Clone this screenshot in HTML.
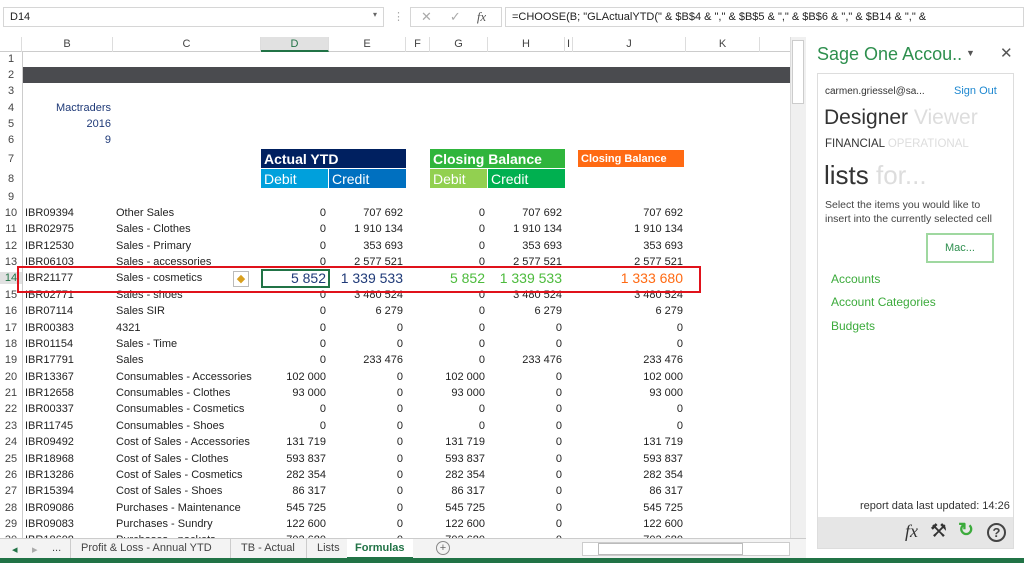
<!DOCTYPE html>
<html><head><meta charset="utf-8"><style>
*{margin:0;padding:0;box-sizing:border-box}
body{width:1024px;height:563px;overflow:hidden;background:#fff;font-family:"Liberation Sans",sans-serif;font-size:11px;color:#222;position:relative}
.a{position:absolute}
.rh{position:absolute;left:0;width:22px;text-align:center;color:#444;font-size:11px}
.c{position:absolute;white-space:nowrap;font-size:11px}
.r{text-align:right}
.ch{position:absolute;top:37px;height:15px;text-align:center;color:#444;font-size:11px;border-right:1px solid #ddd;line-height:15px}
</style></head><body>
<div class="a" style="left:3px;top:7px;width:381px;height:20px;border:1px solid #d6d6d6;padding:3px 6px;font-size:11px">D14<span style="position:absolute;right:6px;top:2px;font-size:8px;color:#666">▾</span></div>
<div class="a" style="left:393px;top:10px;color:#aaa">⋮</div>
<div class="a" style="left:410px;top:7px;width:92px;height:20px;border:1px solid #d6d6d6;color:#aaa;font-size:13px;padding-top:1px"><span style="margin-left:10px">✕</span><span style="margin-left:18px">✓</span><span style="margin-left:16px;font-family:'Liberation Serif';font-style:italic;color:#555">fx</span></div>
<div class="a" style="left:505px;top:7px;width:519px;height:20px;border:1px solid #d6d6d6;padding:3px 6px;font-size:11px">=CHOOSE(B; "GLActualYTD(" &amp; $B$4 &amp; "," &amp; $B$5 &amp; "," &amp; $B$6 &amp; "," &amp; $B14 &amp; "," &amp;</div>
<div class="a" style="left:0;top:37px;width:790px;height:15px;border-bottom:1px solid #ccc"></div>
<div class="ch" style="left:0;width:22px"></div>
<div class="ch" style="left:22px;width:91px">B</div>
<div class="ch" style="left:113px;width:148px">C</div>
<div class="ch" style="left:261px;width:68px;background:#e1e1e1;border-bottom:2px solid #217346;color:#217346">D</div>
<div class="ch" style="left:329px;width:77px">E</div>
<div class="ch" style="left:406px;width:24px">F</div>
<div class="ch" style="left:430px;width:58px">G</div>
<div class="ch" style="left:488px;width:77px">H</div>
<div class="ch" style="left:565px;width:8px">I</div>
<div class="ch" style="left:573px;width:113px">J</div>
<div class="ch" style="left:686px;width:74px">K</div>
<div class="a" style="left:22px;top:52px;width:1px;height:486px;background:#ccc"></div>
<div class="rh" style="top:53px">1</div>
<div class="rh" style="top:69px">2</div>
<div class="a" style="left:23px;top:67px;width:767px;height:16px;background:#4a4b4f"></div>
<div class="rh" style="top:85px">3</div>
<div class="rh" style="top:102px">4</div>
<div class="rh" style="top:118px">5</div>
<div class="rh" style="top:134px">6</div>
<div class="rh" style="top:153px">7</div>
<div class="rh" style="top:173px">8</div>
<div class="rh" style="top:191px">9</div>
<div class="c r" style="left:22px;width:89px;top:102px;color:#1f3a78">Mactraders</div>
<div class="c r" style="left:22px;width:89px;top:118px;color:#1f3a78">2016</div>
<div class="c r" style="left:22px;width:89px;top:134px;color:#1f3a78">9</div>
<div class="a" style="left:261px;top:149px;width:145px;height:19px;background:#002060;color:#fff;font-weight:bold;font-size:14px;padding:2px 3px">Actual YTD</div>
<div class="a" style="left:261px;top:169px;width:67px;height:19px;background:#00a0dc;color:#fff;font-size:14px;padding:2px 3px">Debit</div>
<div class="a" style="left:329px;top:169px;width:77px;height:19px;background:#0070c0;color:#fff;font-size:14px;padding:2px 3px">Credit</div>
<div class="a" style="left:430px;top:149px;width:135px;height:19px;background:#2fb53c;color:#fff;font-weight:bold;font-size:14px;padding:2px 3px">Closing Balance</div>
<div class="a" style="left:430px;top:169px;width:57px;height:19px;background:#92d050;color:#fff;font-size:14px;padding:2px 3px">Debit</div>
<div class="a" style="left:488px;top:169px;width:77px;height:19px;background:#00b050;color:#fff;font-size:14px;padding:2px 3px">Credit</div>
<div class="a" style="left:578px;top:150px;width:106px;height:17px;background:#ff6a13;color:#fff;font-weight:bold;font-size:11px;padding:3px 3px">Closing Balance</div>
<div id="rows"></div>
<div class="a" style="left:17px;top:266px;width:684px;height:27px;border:2px solid #e0121b"></div>
<div class="a" style="left:261px;top:269px;width:69px;height:19px;border:2px solid #217346"></div>
<div class="a" style="left:233px;top:271px;width:16px;height:16px;border:1px solid #bbb;background:#fff;text-align:center;color:#d9a020;font-size:11px">◆</div>
<div class="a" style="left:790px;top:37px;width:16px;height:501px;background:#f0f0f0;border-left:1px solid #ddd"></div>
<div class="a" style="left:792px;top:40px;width:12px;height:64px;background:#fff;border:1px solid #ccc"></div>
<div class="a" style="left:0;top:538px;width:806px;height:20px;background:#f3f3f3;border-top:1px solid #ccc;color:#444;font-size:11px">
<span class="a" style="left:12px;top:4px;color:#217346">◂</span><span class="a" style="left:32px;top:4px;color:#aaa">▸</span><span class="a" style="left:52px;top:3px">...</span>
<span class="a" style="left:70px;top:0;height:19px;border-left:1px solid #ccc;padding:3px 10px">Profit &amp; Loss - Annual YTD</span>
<span class="a" style="left:230px;top:0;height:19px;border-left:1px solid #ccc;padding:3px 10px">TB - Actual</span>
<span class="a" style="left:306px;top:0;height:19px;border-left:1px solid #ccc;padding:3px 10px">Lists</span>
<span class="a" style="left:347px;top:0;height:20px;background:#fff;border-bottom:2px solid #217346;padding:3px 8px;color:#217346;font-weight:bold">Formulas</span>
<span class="a" style="left:436px;top:2px;width:14px;height:14px;border:1px solid #888;border-radius:50%;text-align:center;line-height:12px;color:#666">+</span>
<span class="a" style="left:582px;top:3px;width:208px;height:14px;border:1px solid #ccc;background:#fff"></span>
<span class="a" style="left:598px;top:4px;width:145px;height:12px;border:1px solid #bbb;background:#fff"></span>
</div>
<div class="a" style="left:0;top:558px;width:1024px;height:5px;background:#217346"></div>
<div class="a" style="left:806px;top:30px;width:218px;height:528px;background:#fff"></div>
<div class="a" style="left:817px;top:44px;font-size:18px;color:#2e8f4e">Sage One Accou..</div>
<div class="a" style="left:966px;top:48px;font-size:9px;color:#555">▼</div>
<div class="a" style="left:1000px;top:44px;font-size:15px;color:#555">✕</div>
<div class="a" style="left:817px;top:73px;width:197px;height:476px;border:1px solid #ddd"></div>
<div class="a" style="left:825px;top:86px;font-size:10px;color:#333">carmen.griessel@sa...</div>
<div class="a" style="left:954px;top:85px;font-size:11px;color:#1e88d0">Sign Out</div>
<div class="a" style="left:824px;top:106px;font-size:21px;color:#333">Designer <span style="color:#ddd">Viewer</span></div>
<div class="a" style="left:825px;top:138px;font-size:11.5px;color:#333">FINANCIAL <span style="color:#ddd">OPERATIONAL</span></div>
<div class="a" style="left:824px;top:160px;font-size:26px;color:#333">lists <span style="color:#ddd">for...</span></div>
<div class="a" style="left:825px;top:198px;font-size:10.5px;color:#444;line-height:14px">Select the items you would like to<br>insert into the currently selected cell</div>
<div class="a" style="left:926px;top:233px;width:68px;height:30px;border:2px solid #9fd8a0;text-align:center;line-height:26px;color:#2e8f4e;font-size:11px">Mac...</div>
<div class="a" style="left:831px;top:272px;font-size:12px;color:#3cab3c">Accounts</div>
<div class="a" style="left:831px;top:295px;font-size:12px;color:#3cab3c">Account Categories</div>
<div class="a" style="left:831px;top:319px;font-size:12px;color:#3cab3c">Budgets</div>
<div class="a" style="left:860px;top:500px;font-size:11px;color:#333">report data last updated: 14:26</div>
<div class="a" style="left:818px;top:517px;width:195px;height:31px;background:#e6e6e6"></div>
<div class="a" style="left:905px;top:521px;font-family:'Liberation Serif';font-style:italic;font-size:18px;color:#333">fx</div>
<div class="a" style="left:930px;top:520px;font-size:19px;color:#333">⚒</div>
<div class="a" style="left:958px;top:519px;font-size:19px;color:#3cab3c;font-weight:bold">↻</div>
<div class="a" style="left:987px;top:523px;width:19px;height:19px;border:2px solid #444;border-radius:50%;text-align:center;font-size:13px;line-height:15px;color:#444;font-weight:bold">?</div>
<script>
var d=[["IBR09394","Other Sales","0","707 692","0","707 692","707 692"],
["IBR02975","Sales - Clothes","0","1 910 134","0","1 910 134","1 910 134"],
["IBR12530","Sales - Primary","0","353 693","0","353 693","353 693"],
["IBR06103","Sales - accessories","0","2 577 521","0","2 577 521","2 577 521"],
["IBR21177","Sales - cosmetics","5 852","1 339 533","5 852","1 339 533","1 333 680"],
["IBR02771","Sales - shoes","0","3 480 524","0","3 480 524","3 480 524"],
["IBR07114","Sales SIR","0","6 279","0","6 279","6 279"],
["IBR00383","4321","0","0","0","0","0"],
["IBR01154","Sales - Time","0","0","0","0","0"],
["IBR17791","Sales","0","233 476","0","233 476","233 476"],
["IBR13367","Consumables - Accessories","102 000","0","102 000","0","102 000"],
["IBR12658","Consumables - Clothes","93 000","0","93 000","0","93 000"],
["IBR00337","Consumables - Cosmetics","0","0","0","0","0"],
["IBR11745","Consumables - Shoes","0","0","0","0","0"],
["IBR09492","Cost of Sales - Accessories","131 719","0","131 719","0","131 719"],
["IBR18968","Cost of Sales - Clothes","593 837","0","593 837","0","593 837"],
["IBR13286","Cost of Sales - Cosmetics","282 354","0","282 354","0","282 354"],
["IBR15394","Cost of Sales - Shoes","86 317","0","86 317","0","86 317"],
["IBR09086","Purchases - Maintenance","545 725","0","545 725","0","545 725"],
["IBR09083","Purchases - Sundry","122 600","0","122 600","0","122 600"],
["IBR18608","Purchases - packets","702 680","0","702 680","0","702 680"]];
var h="";
for(var i=0;i<d.length;i++){var t=205+i*16.37,y=t+2,r=d[i],s=i==4;
var fs=s?"font-size:14px;":"";var yy=s?y-2:y;
h+='<div class="rh" style="top:'+y+'px;'+(s?'color:#217346;background:#e1e1e1;':'')+'">'+(10+i)+'</div>';
h+='<div class="c" style="left:25px;top:'+y+'px">'+r[0]+'</div>';
h+='<div class="c" style="left:116px;top:'+y+'px">'+r[1]+'</div>';
h+='<div class="c r" style="left:261px;width:65px;top:'+yy+'px;'+fs+(s?'color:#1f3a78':'')+'">'+r[2]+'</div>';
h+='<div class="c r" style="left:329px;width:74px;top:'+yy+'px;'+fs+(s?'color:#1f3a78':'')+'">'+r[3]+'</div>';
h+='<div class="c r" style="left:430px;width:55px;top:'+yy+'px;'+fs+(s?'color:#4cbb3c':'')+'">'+r[4]+'</div>';
h+='<div class="c r" style="left:488px;width:74px;top:'+yy+'px;'+fs+(s?'color:#4cbb3c':'')+'">'+r[5]+'</div>';
h+='<div class="c r" style="left:573px;width:110px;top:'+yy+'px;'+fs+(s?'color:#ff6a13':'')+'">'+r[6]+'</div>';}
h='<div style="position:absolute;left:0;top:0;width:790px;height:538px;overflow:hidden">'+h+'</div>';
document.getElementById("rows").innerHTML=h;
</script>
</body></html>
